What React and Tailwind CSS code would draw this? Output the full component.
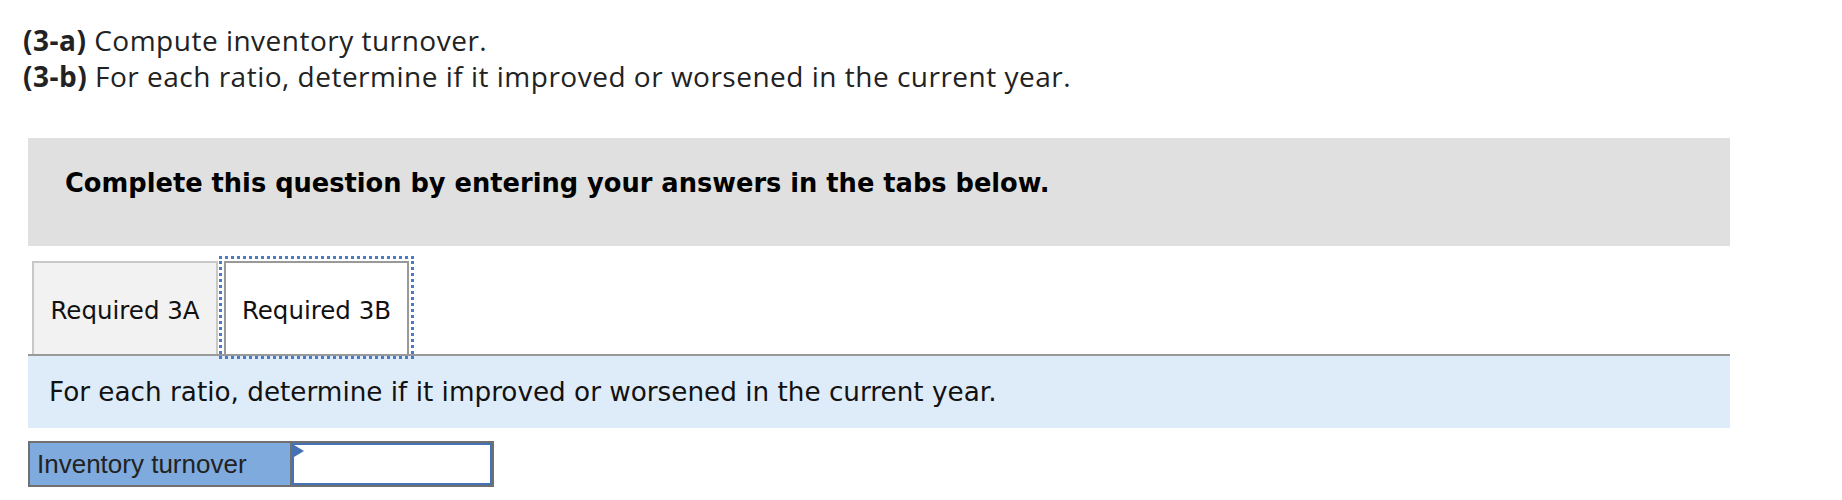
import React from "react";

export default function App() {
  return (
    <div className="w-[1842px] h-[500px] bg-white overflow-hidden">
      <div className="pl-[23px] pt-[22px] text-[28px] leading-[36px] tracking-[0.5px] text-[#222]" style={{ fontFamily: "'Open Sans', Lato, sans-serif" }}>
        <div><span className="font-bold">(3-a)</span> Compute inventory turnover.</div>
        <div><span className="font-bold">(3-b)</span> For each ratio, determine if it improved or worsened in the current year.</div>
      </div>

      <div className="ml-[28px] w-[1702px]" style={{ fontFamily: "'DejaVu Sans', Verdana, sans-serif" }}>
        <div className="mt-[44px] h-[108px] bg-[#e0e0e0] pl-[37px] pt-[29px]">
          <div className="text-[25.7px] leading-[32px] font-bold text-black">
            Complete this question by entering your answers in the tabs below.
          </div>
        </div>

        <div className="mt-[15px] flex items-end pl-[4px]">
          <div className="w-[186px] h-[93px] bg-[#f2f2f2] border-2 border-b-0 border-[#c8c8c8] flex items-center justify-center pt-[5px] text-[24.5px] text-[#111]">
            Required 3A
          </div>
          <div className="ml-[6px] w-[185px] h-[93px] bg-white border-2 border-b-0 border-[#999] flex items-center justify-center pt-[5px] text-[24.5px] text-[#111] outline-[3px] outline-dotted outline-[#4a7cc4] outline-offset-[2px]">
            Required 3B
          </div>
        </div>
        <div className="h-[2px] bg-[#999]"></div>
        <div className="h-[72px] bg-[#deebf8] pl-[21px] flex items-center pt-[2px] text-[26.25px] text-[#111]">
          For each ratio, determine if it improved or worsened in the current year.
        </div>

        <div className="mt-[13px] flex w-[466px] h-[46px] border-2 border-[#707070]">
          <div className="w-[262px] h-full bg-[#7faadd] border-r-2 border-[#707070] flex items-center pl-[7px] text-[26px] text-[#222]" style={{ fontFamily: "'Liberation Sans', Arial, sans-serif" }}>
            Inventory turnover
          </div>
          <div className="relative flex-1 h-full border-2 border-[#4472b4] bg-white">
            <svg className="absolute left-0 top-0" width="10" height="13" viewBox="0 0 10 13">
              <polygon points="0,0 10,6 0,12" fill="#4472b4" />
            </svg>
          </div>
        </div>
      </div>
    </div>
  );
}
